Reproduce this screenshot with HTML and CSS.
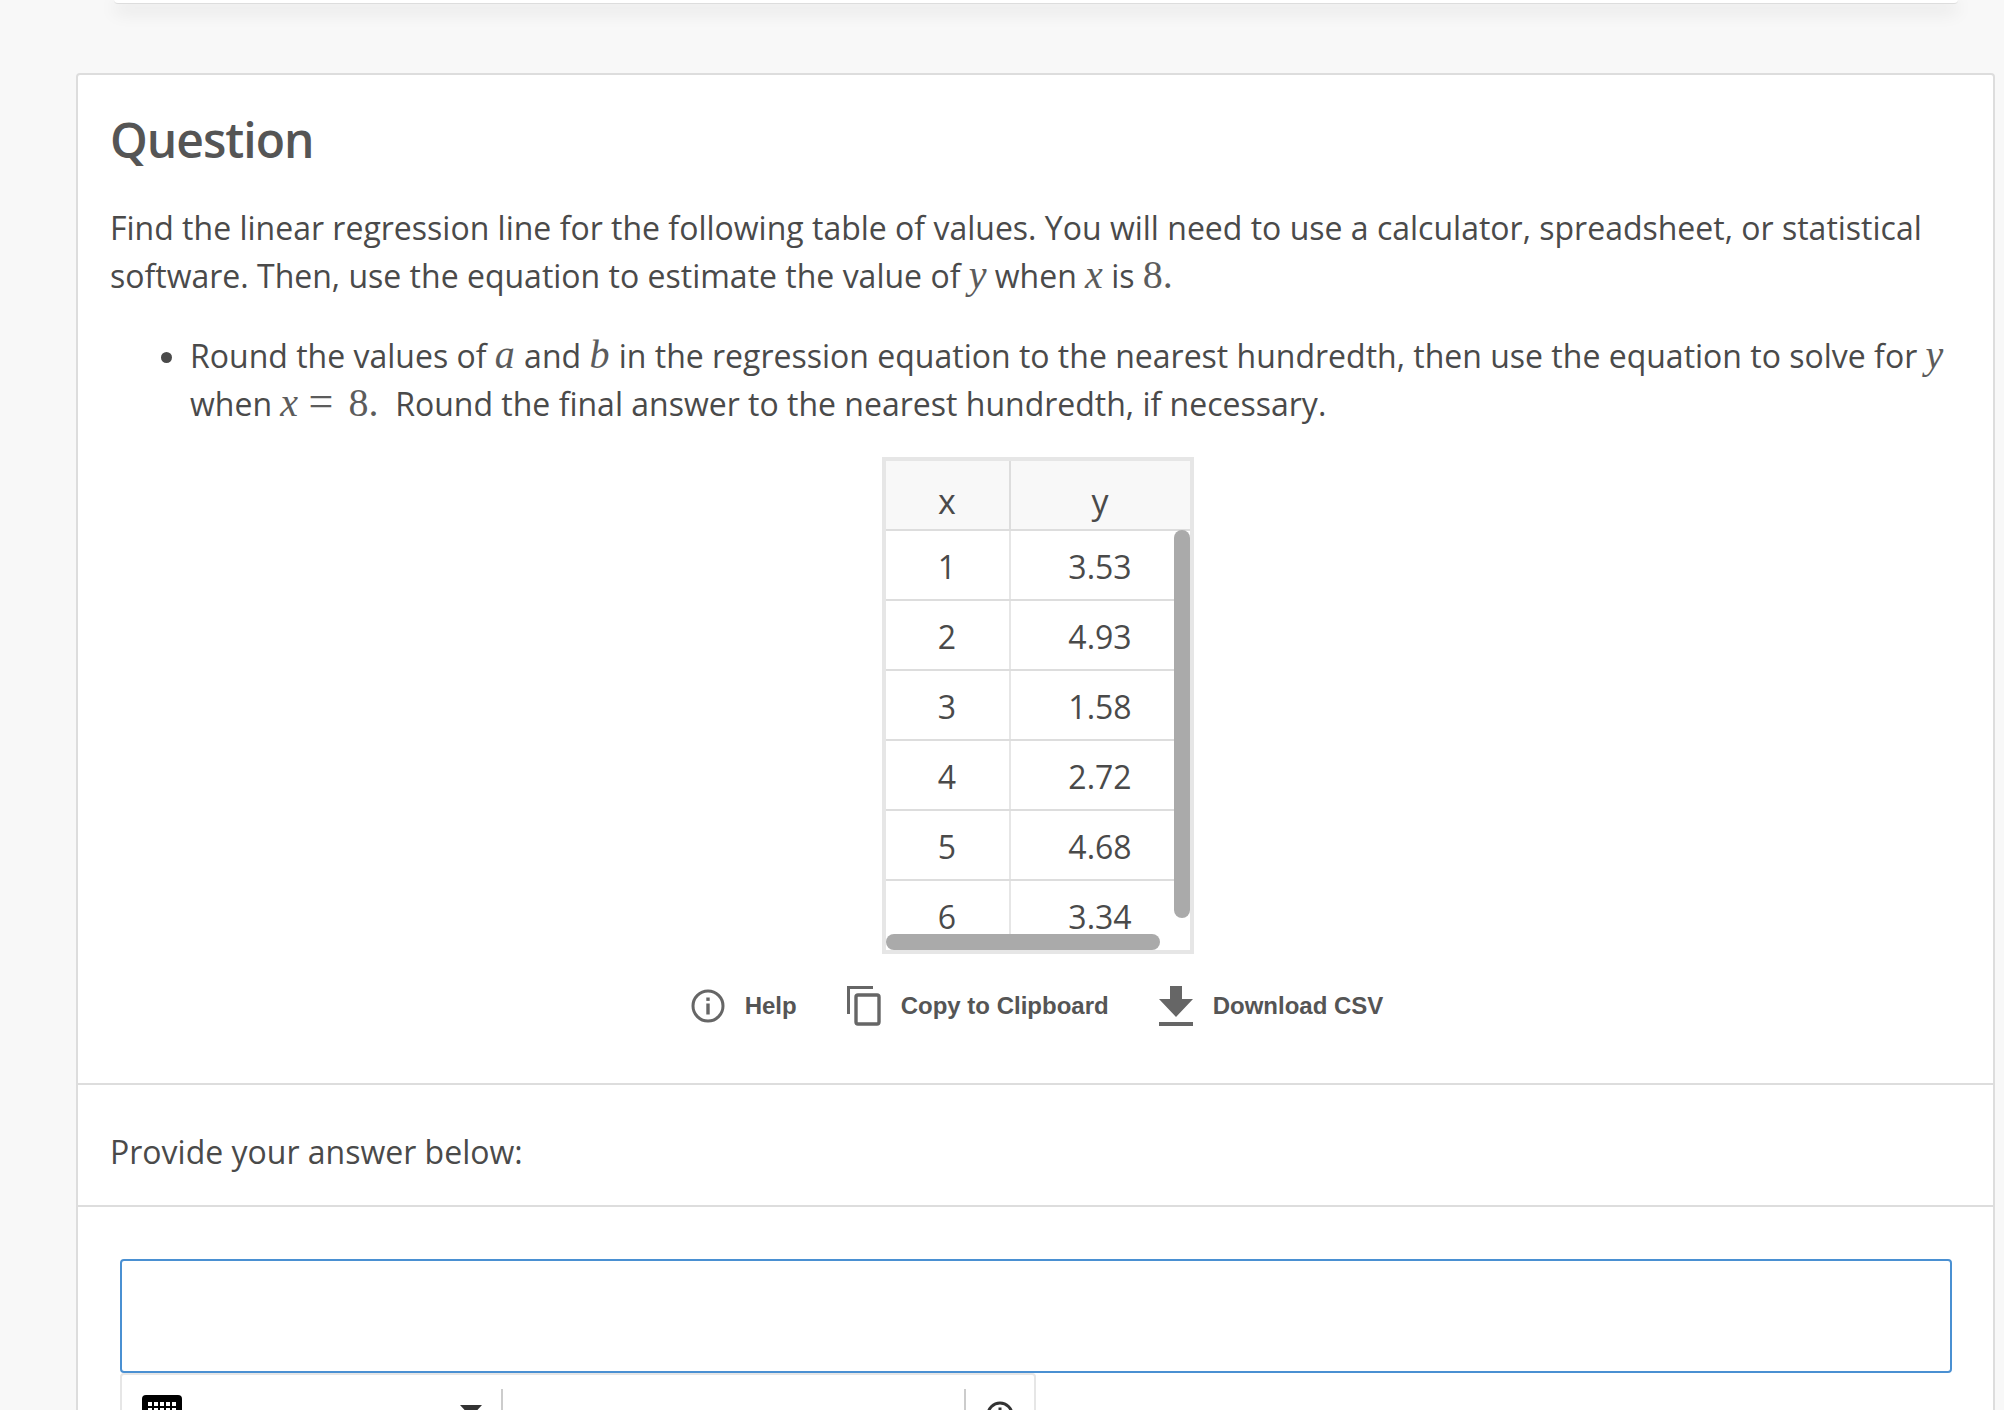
FILE: index.html
```html
<!DOCTYPE html>
<html lang="en">
<head>
    <meta charset="UTF-8">
    <meta name="viewport" content="width=device-width, initial-scale=1.0">
    <title>Question</title>
    <link rel="stylesheet" href="styles.css">
</head>
<body>
    <!-- Bottom edge of the card above -->
    <div class="prev-card"></div>

    <div class="card">
        <div class="question">
            <h2 class="title">Question</h2>
            <p class="text">Find the linear regression line for the following table of values. You will need to use a calculator, spreadsheet, or statistical software. Then, use the equation to estimate the value of <i class="math">y</i> when <i class="math">x</i> is <span class="math">8.</span></p>
            <ul class="list">
                <li>Round the values of <i class="math wide">a</i> and <i class="math wide">b</i> in the regression equation to the nearest hundredth, then use the equation to solve for <i class="math">y</i> when <i class="math">x</i> <span class="math equals">=</span> <span class="math">8.</span>&nbsp; Round the final answer to the nearest hundredth, if necessary.</li>
            </ul>

            <div class="table-wrap">
                <table class="data">
                    <thead>
                        <tr><th class="col-x">x</th><th>y</th></tr>
                    </thead>
                    <tbody>
                        <tr><td>1</td><td>3.53</td></tr>
                        <tr><td>2</td><td>4.93</td></tr>
                        <tr><td>3</td><td>1.58</td></tr>
                        <tr><td>4</td><td>2.72</td></tr>
                        <tr><td>5</td><td>4.68</td></tr>
                        <tr><td>6</td><td>3.34</td></tr>
                    </tbody>
                </table>
                <div class="scroll-y"></div>
                <div class="scroll-x"></div>
            </div>

            <div class="tools">
                <a class="tool">
                    <svg class="icon" width="34" height="34" viewBox="0 0 34 34"><circle cx="17" cy="17" r="15" fill="none" stroke="#666" stroke-width="3"/><rect x="15.3" y="14.5" width="3.4" height="11" fill="#666"/><rect x="15.3" y="8.5" width="3.4" height="3.4" fill="#666"/></svg>
                    Help
                </a>
                <a class="tool">
                    <svg class="icon" width="34" height="40" viewBox="0 0 34 40"><path d="M1.5 28V1.5H26" fill="none" stroke="#666" stroke-width="3"/><rect x="9" y="9" width="23" height="29" rx="2" fill="none" stroke="#666" stroke-width="3.4"/></svg>
                    Copy to Clipboard
                </a>
                <a class="tool">
                    <svg class="icon" width="34" height="40" viewBox="0 0 34 40"><path d="M11 0h12v13h11L17 31 0 13h11z" fill="#666"/><rect y="36" width="34" height="4" fill="#666"/></svg>
                    Download CSV
                </a>
            </div>
        </div>

        <div class="prompt">Provide your answer below:</div>

        <div class="answer">
            <div class="input"></div>
            <div class="editor">
                <div class="editor-kb">
                    <svg width="40" height="30" viewBox="0 0 40 30"><rect width="40" height="30" rx="4" fill="#000"/><g fill="#fff"><rect x="6" y="7" width="4" height="4"/><rect x="12" y="7" width="4" height="4"/><rect x="18" y="7" width="4" height="4"/><rect x="24" y="7" width="4" height="4"/><rect x="30" y="7" width="4" height="4"/><rect x="6" y="13" width="4" height="4"/><rect x="12" y="13" width="4" height="4"/><rect x="18" y="13" width="4" height="4"/><rect x="24" y="13" width="4" height="4"/><rect x="30" y="13" width="4" height="4"/></g></svg>
                    <span class="caret"></span>
                </div>
                <div class="editor-main"></div>
                <div class="editor-info">
                    <svg width="28" height="28" viewBox="0 0 28 28"><circle cx="14" cy="14" r="12" fill="none" stroke="#333" stroke-width="3"/><rect x="12.5" y="11.5" width="3" height="9" fill="#333"/><rect x="12.5" y="6.5" width="3" height="3" fill="#333"/></svg>
                </div>
            </div>
        </div>
    </div>
</body>
</html>
```

FILE: styles.css
```css
* {
    box-sizing: border-box;
    margin: 0;
    padding: 0;
}
html, body {
    height: 1410px;
    overflow: hidden;
}
body {
    background-color: #f8f8f8;
    font-family: "Open Sans", sans-serif;
    font-size: 32px;
    line-height: 48px;
    color: #4a4a4a;
}
.prev-card {
    height: 4px;
    margin: 0 46px 69px 114px;
    background-color: #fff;
    border-bottom: 1px solid #ddd;
    border-radius: 0 0 4px 4px;
    box-shadow: 0 6px 18px rgba(0, 0, 0, 0.2);
}
.card {
    margin: 0 9px 0 76px;
    background-color: #fff;
    border: 2px solid #ddd;
    border-radius: 4px;
}
.question {
    padding: 29px 32px 0;
    height: 1010px;
    border-bottom: 2px solid #ddd;
}
.title {
    font-size: 48px;
    line-height: 72px;
    font-weight: 600;
    letter-spacing: -1px;
    color: #555;
    margin-bottom: 28px;
}
.math {
    font-family: "Liberation Serif", serif;
    font-size: 40px;
    line-height: 1;
    color: #5c5c5c;
}
.wide {
    margin-right: 1px;
}
.equals {
    font-size: 44px;
    margin: 0 7px 0 2px;
}
.list {
    margin: 32px 0 0 80px;
}
.list li::marker {
    font-size: 32px;
}
.table-wrap {
    position: relative;
    left: 2px;
    width: 312px;
    height: 497px;
    margin: 29px auto 0;
    border: 4px solid #e6e6e6;
    overflow: hidden;
}
.data {
    width: 100%;
    table-layout: fixed;
    border-collapse: collapse;
    text-align: center;
}
.data th {
    height: 69px;
    padding-top: 11px;
    font-size: 34px;
    font-weight: 400;
    background-color: #f8f8f8;
    border-right: 2px solid #ddd;
    border-bottom: 2px solid #ddd;
}
.data th:last-child {
    border-right: none;
}
.col-x {
    width: 124px;
}
.data td {
    height: 70px;
    padding-top: 3px;
    border-right: 2px solid #e6e6e6;
    border-bottom: 2px solid #ddd;
}
.data td:last-child {
    border-right: none;
}
.data tr:last-child td {
    border-bottom: none;
}
.scroll-y {
    position: absolute;
    top: 69px;
    right: 0;
    width: 16px;
    height: 388px;
    background-color: #aaa;
    border-radius: 8px;
}
.scroll-x {
    position: absolute;
    left: 0;
    bottom: 0;
    width: 274px;
    height: 16px;
    background-color: #aaa;
    border-radius: 8px;
}
.tools {
    display: flex;
    justify-content: center;
    align-items: center;
    gap: 50px;
    margin-top: 28px;
    padding-left: 3px;
}
.tool {
    display: flex;
    align-items: center;
    gap: 20px;
    font-family: "Liberation Sans", Arial, sans-serif;
    font-size: 24px;
    font-weight: 700;
    color: #555;
}
.prompt {
    padding: 43px 32px 29px;
    border-bottom: 2px solid #ddd;
}
.answer {
    padding: 52px 41px 0 42px;
}
.input {
    height: 114px;
    border: 2px solid #4a90d2;
    border-radius: 4px;
}
.editor {
    display: flex;
    width: 916px;
    height: 80px;
    border: 2px solid #e6e6e6;
    border-radius: 4px;
    padding-top: 14px;
}
.editor-kb {
    display: flex;
    align-items: flex-start;
    justify-content: space-between;
    width: 381px;
    padding: 6px 19px 0 20px;
    border-right: 2px solid #ccc;
}
.caret {
    margin-top: 10px;
    border-left: 11px solid transparent;
    border-right: 11px solid transparent;
    border-top: 12px solid #333;
}
.editor-main {
    flex: 1;
    border-right: 2px solid #ccc;
}
.editor-info {
    width: 68px;
    text-align: center;
    padding-top: 4px;
}
```
